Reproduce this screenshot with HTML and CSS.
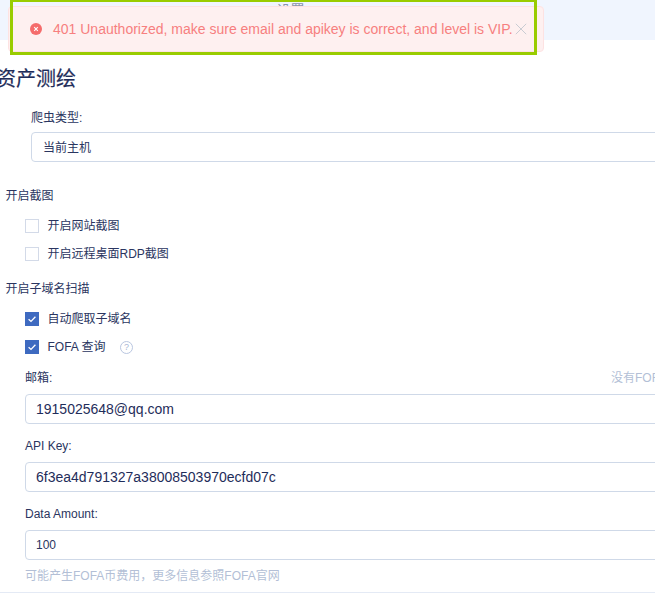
FILE: index.html
```html
<!DOCTYPE html>
<html lang="zh">
<head>
<meta charset="utf-8">
<title>资产测绘</title>
<link rel="stylesheet" href="styles.css">
</head>
<body>
<div class="page">
  <header class="topbar"><span class="topbar-title">设置</span></header>
  <main class="content">
    <h2 class="heading">资产测绘</h2>
    <div class="crawler">
      <label class="label">爬虫类型:</label>
      <div class="field small">当前主机</div>
    </div>
    <div class="section-title first">开启截图</div>
    <div class="checks">
      <div class="check"><span class="box"></span><span>开启网站截图</span></div>
      <div class="check"><span class="box"></span><span>开启远程桌面RDP截图</span></div>
    </div>
    <div class="section-title second">开启子域名扫描</div>
    <div class="checks">
      <div class="check"><span class="box on"><svg viewBox="0 0 14 14" width="14" height="14"><path d="M3.6 7.2 6 9.4 10.4 4.8" fill="none" stroke="#fff" stroke-width="1.3"/></svg></span><span>自动爬取子域名</span></div>
      <div class="check"><span class="box on"><svg viewBox="0 0 14 14" width="14" height="14"><path d="M3.6 7.2 6 9.4 10.4 4.8" fill="none" stroke="#fff" stroke-width="1.3"/></svg></span><span>FOFA 查询</span><span class="help">?</span></div>
    </div>
    <div class="fofa">
      <div class="label-row"><label class="label">邮箱:</label><span class="link">没有FOFA账号?</span></div>
      <div class="field large">1915025648@qq.com</div>
      <label class="label spaced">API Key:</label>
      <div class="field mono">6f3ea4d791327a38008503970ecfd07c</div>
      <label class="label spaced">Data Amount:</label>
      <div class="field small num">100</div>
      <p class="hint">可能产生FOFA币费用，更多信息参照FOFA官网</p>
    </div>
    <div class="rule"></div>
  </main>
</div>
<div class="alert">
  <svg class="alert-icon" viewBox="0 0 12 12" width="12" height="12"><circle cx="6" cy="6" r="6" fill="#f56c6c"/><path d="M4.2 4.2 7.8 7.8M7.8 4.2 4.2 7.8" stroke="#fff" stroke-width="1.1"/></svg>
  <span class="alert-text">401 Unauthorized, make sure email and apikey is correct, and level is VIP.</span>
  <svg class="alert-close" viewBox="0 0 12 12" width="12" height="12"><path d="M0.8 0.8 11.2 11.2M11.2 0.8 0.8 11.2" stroke="#c9ccd3" stroke-width="1"/></svg>
</div>
<div class="highlight"></div>
</body>
</html>
```
FILE: styles.css
```css
* { box-sizing: border-box; }
html, body { margin: 0; padding: 0; height: 100%; overflow: hidden; background: #fff; }
body {
  font-family: "Liberation Sans", "Noto Sans CJK SC", sans-serif;
  color: #2a3560;
  font-size: 12px;
}
.page { width: 720px; }
.topbar {
  height: 40px;
  background: #f0f5fe;
  text-align: center;
  width: 655px;
  overflow: hidden;
}
.topbar-title { display: block; font-size: 14px; line-height: 14px; margin-top: 3px; color: #8b93a8; padding-right: 74px; }
.heading {
  margin: 27px 0 0 -4px;
  font-size: 20px;
  line-height: 24px;
  font-weight: 400;
  color: #1f2d5a;
  -webkit-text-stroke: 0.2px #1f2d5a;
}
.crawler { margin: 19px 0 0 31px; }
.label { display: block; font-size: 12px; line-height: 16px; color: #2a3560; }
.field {
  height: 30px;
  width: 700px;
  border: 1px solid #cfd9e8;
  border-radius: 4px;
  padding: 0 10px;
  display: flex;
  align-items: center;
  color: #2a3560;
}
.crawler .label { margin-bottom: 6px; }
.crawler .field { padding: 0 11px 2px; font-size: 12px; }
.section-title { margin-left: 5.5px; line-height: 16px; color: #2a3560; }
.first { margin-top: 26px; }
.second { margin-top: 20px; }
.checks { margin: 15px 0 0 25px; display: flex; flex-direction: column; gap: 14px; }
.check { display: flex; align-items: center; height: 14px; gap: 8.5px; line-height: 14px; }
.box { width: 14px; height: 14px; border: 1px solid #d3dae8; background: #fff; flex: none; position: relative; }
.box.on { background: #3e6ac0; border: 0; }
.box svg { display: block; }
.help {
  width: 13px; height: 13px; border: 1px solid #b9c6e0; border-radius: 50%;
  color: #a8b6d4; font-size: 9px; line-height: 11px; text-align: center; margin-left: 6px; flex: none;
}
.fofa { margin: 16px 0 0 25px; }
.label-row { display: flex; justify-content: space-between; width: 672px; margin-bottom: 8px; }
.link { color: #b3bfd6; line-height: 16px; }
.fofa .field { padding: 0 10px; }
.large { font-size: 14px; color: #1f2d5a; }
.mono { font-size: 14px; color: #1f2d5a; }
.num { font-size: 12px; }
.spaced { margin: 14px 0 8px; line-height: 16px; }
.hint { margin: 8px 0 0; line-height: 16px; color: #b3bfd6; }
.rule { border-top: 1px solid #e4eaf5; margin-top: 8px; width: 655px; }
.alert {
  position: fixed;
  left: 8px; top: 6px;
  width: 536px; height: 46px;
  background: #fef0f0;
  border: 1px solid #fde2e2;
  border-radius: 4px;
  display: flex; align-items: center;
  padding-left: 21px;
  color: #f77f7f;
  font-size: 14px;
}
.alert-icon { flex: none; }
.alert-text { margin-left: 11px; white-space: nowrap; }
.alert-close { margin-left: 2px; flex: none; }
.highlight {
  position: fixed;
  left: 10px; top: -1px;
  width: 527px; height: 56px;
  border: 3px solid #99cc00;
  pointer-events: none;
}
```
